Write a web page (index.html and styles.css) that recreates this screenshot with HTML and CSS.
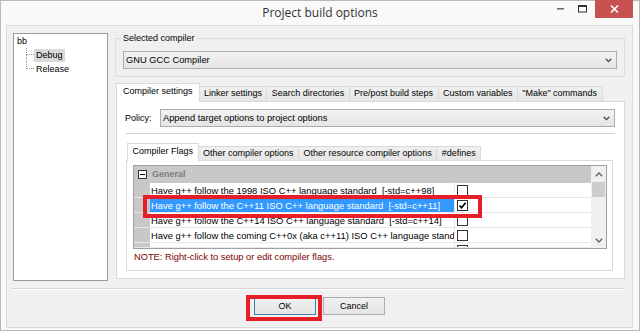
FILE: index.html
```html
<!DOCTYPE html>
<html>
<head>
<meta charset="utf-8">
<title>Project build options</title>
<link rel="stylesheet" href="styles.css">
</head>
<body>
<div class="window">
  <div class="titlebar">
    <div class="title">Project build options</div>
    <div class="controls">
      <div class="ctl"><svg width="8" height="2" viewBox="0 0 8 2"><rect x="0" y="0" width="7" height="1.5" fill="#666"/></svg></div>
      <div class="ctl"><svg width="10" height="8" viewBox="0 0 10 8"><rect x="0.5" y="0.5" width="8" height="6.5" fill="none" stroke="#333"/><rect x="0.5" y="0.5" width="8" height="1.5" fill="#333"/></svg></div>
      <div class="ctl ctl-close"><svg width="9" height="8" viewBox="0 0 9 8"><path d="M1 0.5L8 7.5M8 0.5L1 7.5" stroke="#fff" stroke-width="1.6"/></svg></div>
    </div>
  </div>
  <div class="client">
    <div class="main">
      <div class="tree">
        <div class="node">bb</div>
        <div class="node child">
          <div class="conn"><div class="conn-top"></div><div class="conn-bot"></div></div>
          <span class="label sel">Debug</span>
        </div>
        <div class="node child">
          <div class="conn"><div class="conn-top"></div></div>
          <span class="label">Release</span>
        </div>
      </div>
      <div class="right">
        <fieldset class="group">
          <legend>Selected compiler</legend>
          <div class="combo"><span>GNU GCC Compiler</span><svg class="chev" width="7" height="5" viewBox="0 0 7 5"><polyline points="0.7,0.8 3.5,3.6 6.3,0.8" fill="none" stroke="#444" stroke-width="1.3"/></svg></div>
        </fieldset>
        <div class="tabs outer-tabs">
          <div class="tab active">Compiler settings</div>
          <div class="tab">Linker settings</div>
          <div class="tab">Search directories</div>
          <div class="tab">Pre/post build steps</div>
          <div class="tab">Custom variables</div>
          <div class="tab">"Make" commands</div>
        </div>
        <div class="panel">
          <div class="policy">
            <span class="policy-label">Policy:</span>
            <div class="combo grow"><span>Append target options to project options</span><svg class="chev" width="7" height="5" viewBox="0 0 7 5"><polyline points="0.7,0.8 3.5,3.6 6.3,0.8" fill="none" stroke="#444" stroke-width="1.3"/></svg></div>
          </div>
          <div class="hsep"></div>
          <div class="tabs inner-tabs">
            <div class="tab active">Compiler Flags</div>
            <div class="tab">Other compiler options</div>
            <div class="tab">Other resource compiler options</div>
            <div class="tab">#defines</div>
          </div>
          <div class="inner-panel">
            <div class="pgrid">
              <div class="pg-body">
                <div class="pg-cat">
                  <span class="pg-margin"><span class="pg-toggle"></span></span>
                  <span class="pg-cat-label">General</span>
                </div>
                <div class="pg-row">
                  <span class="pg-margin"></span>
                  <span class="pg-name">Have g++ follow the 1998 ISO C++ language standard&nbsp; [-std=c++98]</span>
                  <span class="pg-value"><span class="cb"></span></span>
                </div>
                <div class="pg-row selected">
                  <span class="pg-margin"></span>
                  <span class="pg-name">Have g++ follow the C++11 ISO C++ language standard&nbsp; [-std=c++11]</span>
                  <span class="pg-value"><span class="cb"><svg width="9" height="9" viewBox="0 0 9 9"><path d="M1.5 4.6L3.6 6.8L7.6 1.8" fill="none" stroke="#000" stroke-width="1.7"/></svg></span></span>
                </div>
                <div class="pg-row">
                  <span class="pg-margin"></span>
                  <span class="pg-name">Have g++ follow the C++14 ISO C++ language standard&nbsp; [-std=c++14]</span>
                  <span class="pg-value"><span class="cb"></span></span>
                </div>
                <div class="pg-row">
                  <span class="pg-margin"></span>
                  <span class="pg-name">Have g++ follow the coming C++0x (aka c++11) ISO C++ language standard&nbsp; [-std=c++0x]</span>
                  <span class="pg-value"><span class="cb"></span></span>
                </div>
                <div class="pg-row pg-last">
                  <span class="pg-margin"></span>
                  <span class="pg-name">Have g++ follow the coming C++1y (aka c++14) ISO C++ language standard&nbsp; [-std=c++1y]</span>
                  <span class="pg-value"><span class="cb"></span></span>
                </div>
              </div>
              <div class="vscroll">
                <div class="sb-arrow"><svg width="8" height="5" viewBox="0 0 8 5"><polyline points="0.8,4.2 4,1 7.2,4.2" fill="none" stroke="#606060" stroke-width="1.3"/></svg></div>
                <div class="sb-thumb"></div>
                <div class="sb-track"></div>
                <div class="sb-arrow"><svg width="8" height="5" viewBox="0 0 8 5"><polyline points="0.8,0.8 4,4 7.2,0.8" fill="none" stroke="#606060" stroke-width="1.3"/></svg></div>
              </div>
              <div class="mark mark-row"></div>
            </div>
            <div class="note">NOTE: Right-click to setup or edit compiler flags.</div>
          </div>
        </div>
      </div>
    </div>
    <div class="sep"></div>
    <div class="buttons">
      <div class="ok-wrap">
        <button class="btn default">OK</button>
        <div class="mark mark-ok"></div>
      </div>
      <button class="btn">Cancel</button>
    </div>
  </div>
</div>
</body>
</html>
```

FILE: styles.css
```css
* { box-sizing: border-box; }
html, body { margin: 0; padding: 0; }
body {
  width: 640px;
  height: 331px;
  overflow: hidden;
  background: #ffffff;
  font-family: "Liberation Sans", Arial, sans-serif;
  font-size: 9px;
  line-height: 11px;
  color: #000;
}

.window {
  width: 640px;
  height: 331px;
  border: 1px solid #b9b9b9;
  background: #f9f9f9;
  display: flex;
  flex-direction: column;
}

/* title bar */
.titlebar {
  flex: none;
  height: 24px;
  display: grid;
  grid-template-columns: 1fr auto 1fr;
}
.title {
  grid-column: 2;
  font-family: "Open Sans", "Noto Sans", sans-serif;
  font-size: 12px;
  line-height: 24px;
  color: #333;
}
.controls {
  grid-column: 3;
  justify-self: end;
  display: flex;
  margin-right: 6px;
  margin-top: -1px;
  height: 18px;
}
.ctl {
  width: 22px;
  height: 18px;
  display: flex;
  align-items: center;
  justify-content: center;
}
.ctl-close {
  width: 38px;
  margin-left: 1px;
  background: #c75050;
}

/* client area */
.client {
  flex: 1;
  margin: 0 6px 2px 5px;
  background: #f0f0f0;
  border: 1px solid #dadada;
  display: flex;
  flex-direction: column;
}
.main {
  display: flex;
  gap: 7px;
  padding: 7px 7px 0 6px;
}

/* tree */
.tree {
  flex: none;
  width: 95px;
  height: 248px;
  background: #fff;
  border: 1px solid #9a9a9a;
  padding: 0 0 0 3px;
}
.node {
  height: 14px;
  line-height: 14px;
  display: flex;
  align-items: stretch;
}
.child { padding-left: 9px; }
.conn { width: 8px; display: flex; flex-direction: column; }
.conn-top {
  height: 7px;
  border-left: 1px dotted #9a9a9a;
  border-bottom: 1px dotted #9a9a9a;
}
.conn-bot {
  height: 7px;
  border-left: 1px dotted #9a9a9a;
}
.label { padding: 0 2px; height: 13px; line-height: 13px; margin-top: 1px; }
.label.sel { background: #d9d9d9; }

/* right column */
.right {
  width: 510px;
  display: flex;
  flex-direction: column;
}
.group {
  margin: 0;
  border: 1px solid #dcdcdc;
  padding: 7px 7px 7px 7px;
  min-width: 0;
}
.group legend {
  padding: 0 1px;
  margin-left: -1px;
  line-height: 11px;
}
.combo {
  height: 18px;
  border: 1px solid #acacac;
  background: linear-gradient(#f2f2f2, #e5e5e5);
  display: flex;
  align-items: center;
  justify-content: space-between;
  padding: 0 4px 0 2px;
  font-size: 9.3px;
  white-space: nowrap;
}
.chev { flex: none; }

/* tabs */
.tabs {
  display: flex;
  align-items: flex-end;
  position: relative;
  z-index: 1;
}
.outer-tabs { height: 18px; margin: 6px 0 0 1px; }
.tab {
  flex: none;
  height: 15px;
  line-height: 13px;
  padding: 0 4.4px;
  border: 1px solid #d9d9d9;
  border-bottom: none;
  background: linear-gradient(#f0f0f0, #e5e5e5);
  white-space: nowrap;
}
.tab + .tab { margin-left: -1px; }
.tab.active {
  height: 19px;
  margin-bottom: -1px;
  background: #fff;
  line-height: 15px;
  position: relative;
  z-index: 2;
}
.outer-tabs .tab.active { padding: 0 6px 0 6px; }

.panel {
  margin-left: 1px;
  height: 178px;
  background: #fff;
  border: 1px solid #d9d9d9;
  padding: 7px 9px 7px 8px;
  display: flex;
  flex-direction: column;
}
.policy {
  display: flex;
  align-items: center;
  height: 18px;
}
.policy-label { width: 35px; flex: none; }
.grow { flex: 1; }
.hsep {
  height: 1px;
  background: #d4d4d4;
  margin: 6px 0 0 1px;
}
.inner-tabs { height: 17px; margin: 9px 0 0 2px; }
.inner-tabs .tab { height: 14px; line-height: 12px; padding: 0 4.5px; }
.inner-tabs .tab.active { height: 18px; line-height: 14px; }

.inner-panel {
  height: 111px;
  margin: 0 2px 0 1px;
  border: 1px solid #d9d9d9;
  background: #fff;
  padding: 4px 5px 0 6px;
}

/* property grid */
.pgrid {
  position: relative;
  height: 84px;
  border: 1px solid #a0a0a0;
  display: flex;
}
.pg-body {
  flex: 1;
  overflow: hidden;
  font-size: 9.4px;
}
.pg-cat {
  height: 17px;
  background: #c8c8c8;
  display: flex;
  align-items: center;
}
.pg-margin {
  flex: none;
  width: 16px;
  align-self: stretch;
  background: #c8c8c8;
  display: flex;
  align-items: center;
  justify-content: center;
}
.pg-toggle {
  width: 9px;
  height: 9px;
  border: 1px solid #333;
  background: #fff;
  display: flex;
  align-items: center;
  justify-content: center;
}
.pg-toggle::before {
  content: "";
  width: 5px;
  height: 1px;
  background: #000;
}
.pg-cat-label {
  padding-left: 2px;
  font-weight: bold;
  font-size: 9px;
  color: #7d7d7d;
}
.pg-row {
  height: 15px;
  display: flex;
  border-bottom: 1px solid #e8e8e8;
}
.pg-name {
  flex: none;
  width: 305px;
  padding: 1px 0 0 1px;
  line-height: 13px;
  white-space: nowrap;
  overflow: hidden;
  border-right: 1px solid #e8e8e8;
}
.pg-last { height: 5px; overflow: hidden; align-items: flex-start; }
.pg-last .pg-name { height: 14px; }
.pg-last .pg-value { align-items: flex-start; padding-top: 2px; }
.pg-row.selected .pg-name {
  background: #3399ff;
  color: #fff;
}
.pg-value {
  flex: 1;
  display: flex;
  align-items: center;
  padding-left: 2px;
}
.cb {
  flex: none;
  width: 11px;
  height: 11px;
  border: 1px solid #333;
  background: #fff;
  display: flex;
  align-items: center;
  justify-content: center;
}

.vscroll {
  flex: none;
  width: 15px;
  background: #f0f0f0;
  display: flex;
  flex-direction: column;
}
.sb-arrow {
  height: 16px;
  display: flex;
  align-items: center;
  justify-content: center;
}
.sb-thumb {
  height: 15px;
  margin: 0 1px;
  background: #cdcdcd;
}
.sb-track { flex: 1; }

.note {
  margin-top: 3px;
  margin-left: 1px;
  color: #800000;
  font-size: 9.3px;
}

/* red annotation rectangles */
.mark {
  position: absolute;
  border: 4px solid #e61e28;
  pointer-events: none;
}
.mark-row {
  left: 9px;
  top: 29px;
  width: 339px;
  height: 23px;
}

/* bottom */
.sep {
  margin: 7px 7px 0 6px;
  border-top: 1px solid #d5d5d5;
  border-bottom: 1px solid #fff;
}
.buttons {
  display: flex;
  justify-content: center;
  gap: 7px;
  margin-top: 7px;
}
.ok-wrap { position: relative; display: flex; }
.btn {
  width: 62px;
  height: 18px;
  margin: 0;
  padding: 0;
  border: 1px solid #acacac;
  background: linear-gradient(#f0f0f0, #e5e5e5);
  font-family: "Liberation Sans", Arial, sans-serif;
  font-size: 9px;
  color: #000;
}
.btn.default { border-color: #3c7fb1; }
.mark-ok {
  left: -8px;
  top: -2px;
  right: -6px;
  bottom: -6px;
}
```
